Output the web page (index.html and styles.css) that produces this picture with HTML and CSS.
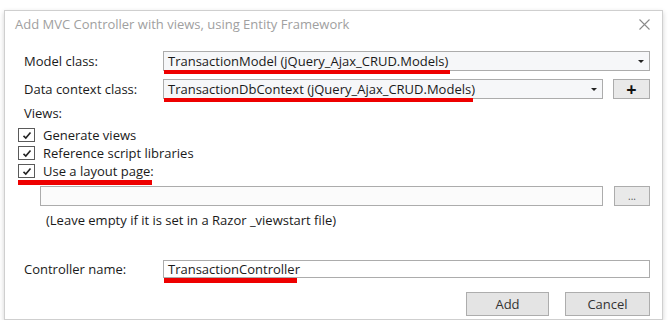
FILE: index.html
```html
<!DOCTYPE html>
<html lang="en">
  <head>
    <meta charset="UTF-8" />
    <meta name="viewport" content="width=device-width, initial-scale=1.0" />
    <title>Add MVC Controller</title>
    <link rel="stylesheet" href="styles.css">
  </head>
  <body>
    <div class="dialog">
      <div class="title-bar">
        <span class="title">Add MVC Controller with views, using Entity Framework</span>
        <svg class="close" width="11" height="11" viewBox="0 0 11 11">
          <path d="M0.5 0.5 L10.5 10.5 M10.5 0.5 L0.5 10.5" stroke="#8a8a8a" stroke-width="1.1" fill="none" />
        </svg>
      </div>

      <div class="content">
        <div class="field-row">
          <label class="label">Model class:</label>
          <div class="combo">
            <span class="combo-text">TransactionModel (jQuery_Ajax_CRUD.Models)</span>
            <span class="arrow"></span>
            <span class="mark mark-model"></span>
          </div>
        </div>

        <div class="field-row data-row">
          <label class="label">Data context class:</label>
          <div class="combo">
            <span class="combo-text">TransactionDbContext (jQuery_Ajax_CRUD.Models)</span>
            <span class="arrow"></span>
            <span class="mark mark-data"></span>
          </div>
          <button class="small-btn plus">+</button>
        </div>

        <div class="views-label">Views:</div>

        <div class="check-row">
          <span class="checkbox"><svg width="10" height="9" viewBox="0 0 10 9"><path d="M1.5 4.8 L3.8 7 L8.5 1.5" stroke="#222" stroke-width="1.6" fill="none" /></svg></span>
          <span>Generate views</span>
        </div>
        <div class="check-row">
          <span class="checkbox"><svg width="10" height="9" viewBox="0 0 10 9"><path d="M1.5 4.8 L3.8 7 L8.5 1.5" stroke="#222" stroke-width="1.6" fill="none" /></svg></span>
          <span>Reference script libraries</span>
        </div>
        <div class="check-row layout-check">
          <span class="checkbox"><svg width="10" height="9" viewBox="0 0 10 9"><path d="M1.5 4.8 L3.8 7 L8.5 1.5" stroke="#222" stroke-width="1.6" fill="none" /></svg></span>
          <span>Use a layout page:</span>
          <span class="mark mark-layout"></span>
        </div>

        <div class="layout-row">
          <div class="text-input"></div>
          <button class="small-btn dots">...</button>
        </div>

        <div class="note">(Leave empty if it is set in a Razor _viewstart file)</div>

        <div class="field-row controller-row">
          <label class="label">Controller name:</label>
          <div class="text-input name-input">
            <span class="combo-text">TransactionController</span>
            <span class="mark mark-name"></span>
          </div>
        </div>

        <div class="actions">
          <button class="btn add-btn">Add</button>
          <button class="btn cancel-btn">Cancel</button>
        </div>
      </div>
    </div>
  </body>
</html>
```

FILE: styles.css
```css
* {
  margin: 0;
  padding: 0;
  box-sizing: border-box;
  font-family: "Open Sans", "Noto Sans", sans-serif;
}
body {
  background-color: #ffffff;
  color: #1a1a1a;
  font-size: 13px;
}
.dialog {
  margin: 10px 0 0 4px;
  width: 659px;
  height: 310px;
  background: #ffffff;
  border: 1px solid #cfcfcf;
  box-shadow: 0 2px 5px rgba(0, 0, 0, 0.18);
}
.title-bar {
  height: 26px;
  display: flex;
  align-items: center;
  justify-content: space-between;
  padding: 0 12px 0 10px;
}
.title {
  color: #a0a0a0;
  font-size: 13px;
}
.content {
  padding: 0 12px 0 13px;
}
.field-row {
  display: grid;
  grid-template-columns: 145px 1fr;
  align-items: center;
  height: 20px;
  margin-top: 14px;
}
.data-row {
  grid-template-columns: 145px 1fr 47px;
  margin-top: 8px;
}
.data-row .small-btn {
  margin-left: 10px;
}
.label {
  padding-left: 6px;
  color: #1a1a1a;
}
.combo,
.text-input {
  position: relative;
  height: 20px;
  border: 1px solid #acacac;
  background: #f6f7f9;
  display: flex;
  align-items: center;
}
.combo-text {
  padding-left: 4px;
  white-space: nowrap;
}
.arrow {
  position: absolute;
  right: 5px;
  top: 8px;
  width: 0;
  height: 0;
  border-left: 3px solid transparent;
  border-right: 3px solid transparent;
  border-top: 3px solid #222;
}
.mark {
  position: absolute;
  height: 4px;
  background: #ee0000;
}
.mark-model {
  left: 0;
  bottom: -4px;
  width: 286px;
}
.mark-data {
  left: 0;
  bottom: -4px;
  width: 309px;
}
.small-btn {
  height: 20px;
  border: 1px solid #acacac;
  background: #e9e9e9;
  color: #111;
  cursor: pointer;
}
.plus {
  font-size: 18px;
  font-weight: bold;
  line-height: 16px;
}
.dots {
  font-size: 10px;
  color: #555;
  line-height: 12px;
}
.views-label {
  margin-top: 6px;
  height: 16px;
  line-height: 16px;
  padding-left: 6px;
}
.check-row {
  position: relative;
  display: flex;
  align-items: center;
  gap: 8px;
  height: 18px;
}
.views-label + .check-row {
  margin-top: 5px;
}
.checkbox {
  width: 17px;
  height: 14px;
  border: 1px solid #5a5a5a;
  background: #ffffff;
  display: flex;
  align-items: center;
  justify-content: center;
}
.mark-layout {
  left: 0;
  bottom: -5px;
  width: 134px;
  height: 5px;
}
.layout-row {
  display: grid;
  grid-template-columns: 1fr 36px;
  column-gap: 11px;
  padding-left: 22px;
  margin-top: 6px;
  height: 20px;
}
.layout-row .text-input {
  background: #fbfbfb;
}
.note {
  margin-top: 6px;
  padding-left: 28px;
  height: 16px;
  line-height: 16px;
}
.controller-row {
  margin-top: 32px;
  height: 18px;
}
.name-input {
  height: 18px;
  background: #ffffff;
}
.mark-name {
  left: 0;
  bottom: -6px;
  width: 133px;
  height: 5px;
}
.actions {
  display: flex;
  justify-content: flex-end;
  gap: 16px;
  margin-top: 14px;
}
.btn {
  height: 24px;
  border: 1px solid #adadad;
  background: #e4e4e4;
  color: #333;
  font-size: 13px;
  cursor: pointer;
}
.add-btn {
  width: 83px;
}
.cancel-btn {
  width: 85px;
}
```
